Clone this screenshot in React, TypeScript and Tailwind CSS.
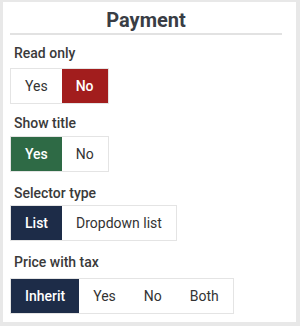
import { useState } from "react";

type Field = {
  label: string;
  options: string[];
  active: string;
  color: string;
  gap: string;
};

const FIELDS: Field[] = [
  { label: "Read only", options: ["Yes", "No"], active: "No", color: "bg-[#a21d1d]", gap: "mt-[8px]" },
  { label: "Show title", options: ["Yes", "No"], active: "Yes", color: "bg-[#2e6a45]", gap: "mt-[9px]" },
  { label: "Selector type", options: ["List", "Dropdown list"], active: "List", color: "bg-[#1d2c48]", gap: "mt-[11px]" },
  { label: "Price with tax", options: ["Inherit", "Yes", "No", "Both"], active: "Inherit", color: "bg-[#1d2c48]", gap: "mt-[11px]" },
];

const LABEL_GAPS = ["mt-[5px]", "mt-[3px]", "mt-[2px]", "mt-[6px]"];

function Segmented({ field }: { field: Field }) {
  const [value, setValue] = useState(field.active);
  return (
    <div className="flex w-max border border-[#e4e4e4] bg-white">
      {field.options.map((opt) => (
        <button
          key={opt}
          onClick={() => setValue(opt)}
          className={`h-[34px] px-[14px] text-[14px] leading-none ${
            value === opt ? `${field.color} text-white font-medium` : "text-[#333]"
          }`}
        >
          {opt}
        </button>
      ))}
    </div>
  );
}

export default function App() {
  return (
    <div
      className="w-[300px] h-[326px] bg-[#e8e8e8] pl-[3px] pt-[2px] pr-[4px] pb-[4px]"
      style={{ fontFamily: "Roboto, 'Liberation Sans', sans-serif" }}
    >
      <div className="h-full bg-white pl-[7px] pr-[14px]">
        <h1 className="h-[33px] pt-[5px] text-center text-[20px] font-bold leading-[26px] text-[#393d45] border-b-2 border-[#e2e2e2]">
          Payment
        </h1>
        {FIELDS.map((f, i) => (
          <div key={f.label} className={f.gap}>
            <div className="pl-[4px] text-[14px] font-medium leading-[20px] text-[#3a3a3a]">
              {f.label}
            </div>
            <div className={LABEL_GAPS[i]}>
              <Segmented field={f} />
            </div>
          </div>
        ))}
      </div>
    </div>
  );
}
